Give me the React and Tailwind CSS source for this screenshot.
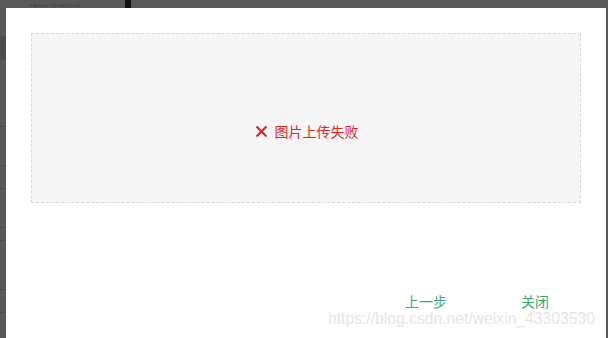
import React from "react";

export default function App() {
  return (
    <div
      className="relative w-[608px] h-[338px] overflow-hidden bg-[#595959]"
      style={{ fontFamily: '"Liberation Sans", "Noto Sans CJK SC", sans-serif' }}
    >
      {/* faint background page behind the overlay */}
      <div className="absolute inset-0 flex">
        <div className="w-[6px] flex flex-col">
          <div className="h-[36px]" />
          <div className="h-[24px] bg-[#4d4d4d]" />
          <div className="h-[66px]" />
          <div className="h-px bg-[#4a4a4a]" />
          <div className="h-[38px]" />
          <div className="h-px bg-[#4a4a4a]" />
          <div className="h-[22px]" />
          <div className="h-px bg-[#4a4a4a]" />
          <div className="h-[38px]" />
          <div className="h-px bg-[#4a4a4a]" />
          <div className="h-[12px]" />
          <div className="h-px bg-[#4a4a4a]" />
          <div className="h-[48px]" />
          <div className="h-px bg-[#4a4a4a]" />
          <div className="h-[22px]" />
          <div className="h-px bg-[#4a4a4a]" />
        </div>
        <div className="flex items-start gap-[45px] pl-[24px] pt-[3px]">
          <div className="text-[4px] leading-[5px] text-[#3a3a3a]">P Address: 192.168.120.130</div>
          <div className="w-[6px] h-[8px] -mt-[3px] bg-[#111]" />
        </div>
      </div>

      <div className="relative pt-[8px] pl-[6px]">
        <div className="w-[600px] h-[330px] bg-white pt-[25px] pl-[25px]">
          <div className="w-[550px] h-[170px] bg-[#f5f5f5] border border-dashed border-[#d9d9d9] flex justify-center pt-[87px] pl-[2px]">
            <div className="flex items-center h-[20px] text-[14px] text-[#e3241f]">
              <svg width="11" height="11" viewBox="0 0 11 11" className="mr-[8px]">
                <path d="M1.3 1.3 L9.7 9.7 M9.7 1.3 L1.3 9.7" stroke="#e3241f" strokeWidth="2.2" strokeLinecap="square" />
              </svg>
              <span style={{ fontFamily: '"Noto Sans CJK SC", sans-serif' }}>图片上传失败</span>
            </div>
          </div>
          <div
            className="flex justify-end pr-[57px] gap-[74px] mt-[88px] text-[14px] leading-[20px] text-[#3aa86f]"
            style={{ fontFamily: '"Noto Sans CJK SC", sans-serif' }}
          >
            <span>上一步</span>
            <span>关闭</span>
          </div>
        </div>
      </div>

      {/* watermark */}
      <div className="absolute left-[328px] top-[308px] text-[15.7px] leading-[22px] text-[#e6e6e6] whitespace-nowrap">
        https://blog.csdn.net/weixin_43303530
      </div>
    </div>
  );
}
